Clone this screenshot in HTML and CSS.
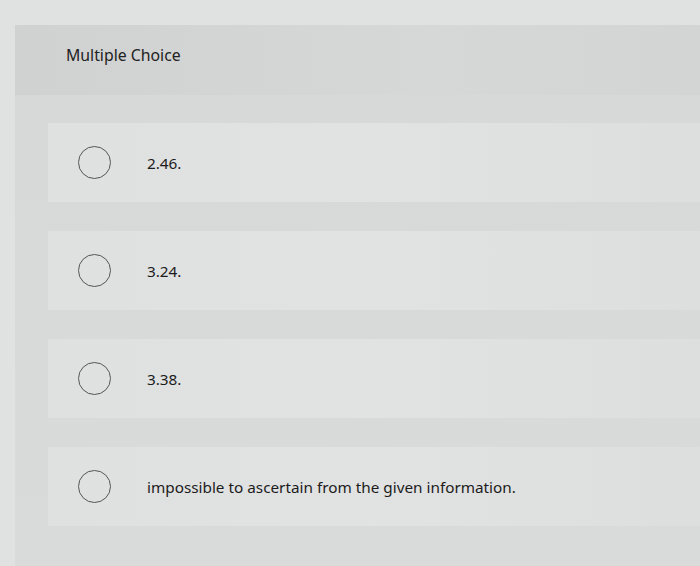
FILE: index.html
```html
<!DOCTYPE html>
<html lang="en">
<head>
  <meta charset="UTF-8" />
  <title>Multiple Choice</title>
  <link rel="stylesheet" href="styles.css">
</head>
<body>
  <div class="page">
    <div class="panel">
      <div class="panel-head">Multiple Choice</div>
      <div class="choices">
        <label class="choice"><span class="radio"></span><span class="choice-text">2.46.</span></label>
        <label class="choice"><span class="radio"></span><span class="choice-text">3.24.</span></label>
        <label class="choice"><span class="radio"></span><span class="choice-text">3.38.</span></label>
        <label class="choice"><span class="radio"></span><span class="choice-text">impossible to ascertain from the given information.</span></label>
      </div>
    </div>
  </div>
</body>
</html>
```

FILE: styles.css
```css
body {
  margin: 0;
  background: #e0e1e1;
  font-family: 'Noto Sans', Lato, sans-serif;
  color: #1c1c1c;
}

.page {
  padding: 25px 0 0 15px;
  height: 541px;
  overflow: hidden;
}

.panel {
  background: linear-gradient(90deg, #d0d1d1 0%, #d6d7d7 60%, #d3d4d4 100%);
  height: 100%;
}

.panel-head {
  height: 70px;
  padding-left: 51px;
  display: flex;
  align-items: center;
  font-size: 15.8px;
  color: #222;
  box-sizing: border-box;
  padding-bottom: 10px;
}

.choices {
  padding: 28px 0 0 33px;
  background: linear-gradient(180deg, #d7d8d8 0%, #d9dada 100%);
  height: 471px;
  box-sizing: border-box;
}

.choice {
  display: flex;
  align-items: center;
  height: 79px;
  margin-bottom: 29px;
  padding-left: 30px;
  background: linear-gradient(90deg, #dfe0e0 0%, #e1e2e2 50%, #dddede 100%);
}

.radio {
  width: 31px;
  height: 31px;
  border: 1.5px solid #555;
  border-radius: 50%;
  flex: none;
}

.choice-text {
  margin-left: 36px;
  font-size: 15.3px;
  color: #1c1c1c;
}
```
